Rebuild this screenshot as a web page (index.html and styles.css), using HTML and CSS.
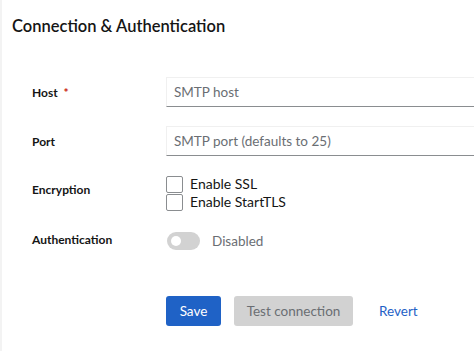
FILE: index.html
```html
<!DOCTYPE html>
<html lang="en">
<head>
<meta charset="utf-8">
<title>Connection &amp; Authentication</title>
<link rel="stylesheet" href="styles.css">
</head>
<body>
<div class="page">
  <h1 class="title">Connection &amp; Authentication</h1>
  <form class="form">
    <div class="row row-host">
      <label class="label" for="host">Host <span class="req">*</span></label>
      <input class="input" id="host" type="text" placeholder="SMTP host">
    </div>
    <div class="row row-port">
      <label class="label" for="port">Port</label>
      <input class="input" id="port" type="text" placeholder="SMTP port (defaults to 25)">
    </div>
    <div class="row row-enc">
      <span class="label label-top">Encryption</span>
      <div class="checks">
        <label class="check"><span class="box"></span>Enable SSL</label>
        <label class="check"><span class="box"></span>Enable StartTLS</label>
      </div>
    </div>
    <div class="row row-auth">
      <span class="label label-auth">Authentication</span>
      <div class="switch-wrap">
        <span class="switch"><span class="knob"></span></span>
        <span class="switch-text">Disabled</span>
      </div>
    </div>
    <div class="actions">
      <button type="button" class="btn btn-primary">Save</button>
      <button type="button" class="btn btn-disabled">Test connection</button>
      <button type="button" class="btn btn-link">Revert</button>
    </div>
  </form>
</div>
</body>
</html>
```

FILE: styles.css
```css
html, body {
  margin: 0;
  padding: 0;
  background: #ffffff;
  overflow: hidden;
}
body {
  font-family: Lato, "Liberation Sans", sans-serif;
  color: #151515;
  width: 474px;
  height: 351px;
}
.page {
  border-left: 2px solid #f3f3f3;
  height: 351px;
  box-sizing: border-box;
}
.title {
  margin: 0;
  padding: 14px 0 0 10px;
  font-size: 16.5px;
  font-weight: 600;
  line-height: 24px;
}
.form {
  margin-top: 39px;
  display: flex;
  flex-direction: column;
}
.row {
  display: grid;
  grid-template-columns: 134px 1fr;
  align-items: center;
  padding-left: 30px;
}
.row-port { margin-top: 19px; }
.row-enc { margin-top: 19px; }
.row-auth { margin-top: 18px; }
.label {
  font-size: 12px;
  font-weight: 700;
  color: #151515;
}
.label-top {
  align-self: start;
  padding-top: 7px;
}
.label-auth {
  margin-top: -3px;
}
.req {
  color: #c9190b;
  margin-left: 3px;
}
.input {
  box-sizing: border-box;
  height: 30px;
  width: 100%;
  margin: 0;
  padding: 0 7px;
  border: 1px solid #f0f0f0;
  border-right: none;
  border-bottom-color: #8a8d90;
  font-family: inherit;
  font-size: 13.5px;
  color: #151515;
  outline: none;
  background: #fff;
}
.input::placeholder {
  color: #6a6e73;
}
.checks {
  display: flex;
  flex-direction: column;
}
.check {
  display: flex;
  align-items: center;
  font-size: 14px;
  line-height: 18px;
  color: #151515;
}
.box {
  box-sizing: border-box;
  width: 17px;
  height: 17px;
  border: 1px solid #8a8d90;
  border-radius: 2px;
  margin-right: 7px;
  background: #fff;
}
.switch-wrap {
  display: flex;
  align-items: center;
  height: 24px;
}
.switch {
  position: relative;
  display: inline-block;
  width: 33px;
  height: 18px;
  border-radius: 9px;
  background: #d2d2d2;
  margin-left: 1px;
}
.knob {
  position: absolute;
  left: 4px;
  top: 4px;
  width: 10px;
  height: 10px;
  border-radius: 50%;
  background: #fff;
}
.switch-text {
  margin-left: 12px;
  font-size: 13.5px;
  color: #6a6e73;
}
.actions {
  display: flex;
  align-items: center;
  margin-top: 43px;
  padding-left: 164px;
  gap: 13px;
}
.btn {
  font-family: inherit;
  font-size: 13.5px;
  height: 30px;
  border: none;
  border-radius: 3px;
  margin: 0;
  padding: 0;
  cursor: pointer;
}
.btn-primary {
  background: #1f62c6;
  color: #fff;
  width: 55px;
}
.btn-disabled {
  background: #d2d2d2;
  color: #6a6e73;
  width: 119px;
}
.btn-link {
  background: transparent;
  color: #1f62c6;
  padding: 0 13px;
}
```
